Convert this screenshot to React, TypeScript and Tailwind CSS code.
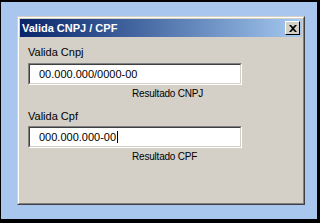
import React from "react";

const font = { fontFamily: '"Liberation Sans", Arial, sans-serif' };

function Field({ value, caret }: { value: string; caret?: boolean }) {
  return (
    <div className="w-[214px] h-[22px] border-t border-l border-t-[#808080] border-l-[#808080] border-b border-r border-b-white border-r-white">
      <div className="h-full border-t border-l border-t-[#404040] border-l-[#404040] border-b border-r border-b-[#d4d0c8] border-r-[#d4d0c8] bg-white flex items-center pl-[9px]">
        <span className="text-[11px] leading-[13px] text-black">{value}</span>
        {caret && <span className="w-px h-[12px] bg-black ml-px" />}
      </div>
    </div>
  );
}

export default function App() {
  return (
    <div
      className="w-[320px] h-[223px] bg-[#a8c6ee] border-black border-t-2 border-l border-r-[3px] border-b-4 pl-[16px] pt-[14px]"
      style={font}
    >
      <div className="w-[288px] h-[189px] border border-t-[#d4d0c8] border-l-[#d4d0c8] border-b-[#404040] border-r-[#404040]">
        <div className="h-full border border-t-white border-l-white border-b-[#808080] border-r-[#808080] bg-[#d4d0c8] p-px flex flex-col">
          <div className="h-[18px] bg-gradient-to-r from-[#0a246a] to-[#a6caf0] flex items-center justify-between pl-[2px] pr-[2px]">
            <span className="text-white font-bold text-[11px] leading-[13px]">Valida CNPJ / CPF</span>
            <div className="w-[15px] h-[14px] border border-t-white border-l-white border-b-black border-r-black bg-[#d4d0c8] flex items-center justify-center">
              <svg width="8" height="7" viewBox="0 0 8 7">
                <path d="M0 0h2l2 2 2-2h2L5 3.5 8 7H6L4 5 2 7H0l3-3.5z" fill="black" />
              </svg>
            </div>
          </div>
          <div className="flex flex-col pl-[8px] pt-[9px] text-[11px] leading-[13px] text-black">
            <span>Valida Cnpj</span>
            <div className="mt-[4px]">
              <Field value="00.000.000/0000-00" />
            </div>
            <span className="mt-[2px] pl-[104px] text-[10px] tracking-[-0.2px]">Resultado CNPJ</span>
            <span className="mt-[10px]">Valida Cpf</span>
            <div className="mt-[3px]">
              <Field value="000.000.000-00" caret />
            </div>
            <span className="mt-[2px] pl-[104px] text-[10px] tracking-[-0.2px]">Resultado CPF</span>
          </div>
        </div>
      </div>
    </div>
  );
}
